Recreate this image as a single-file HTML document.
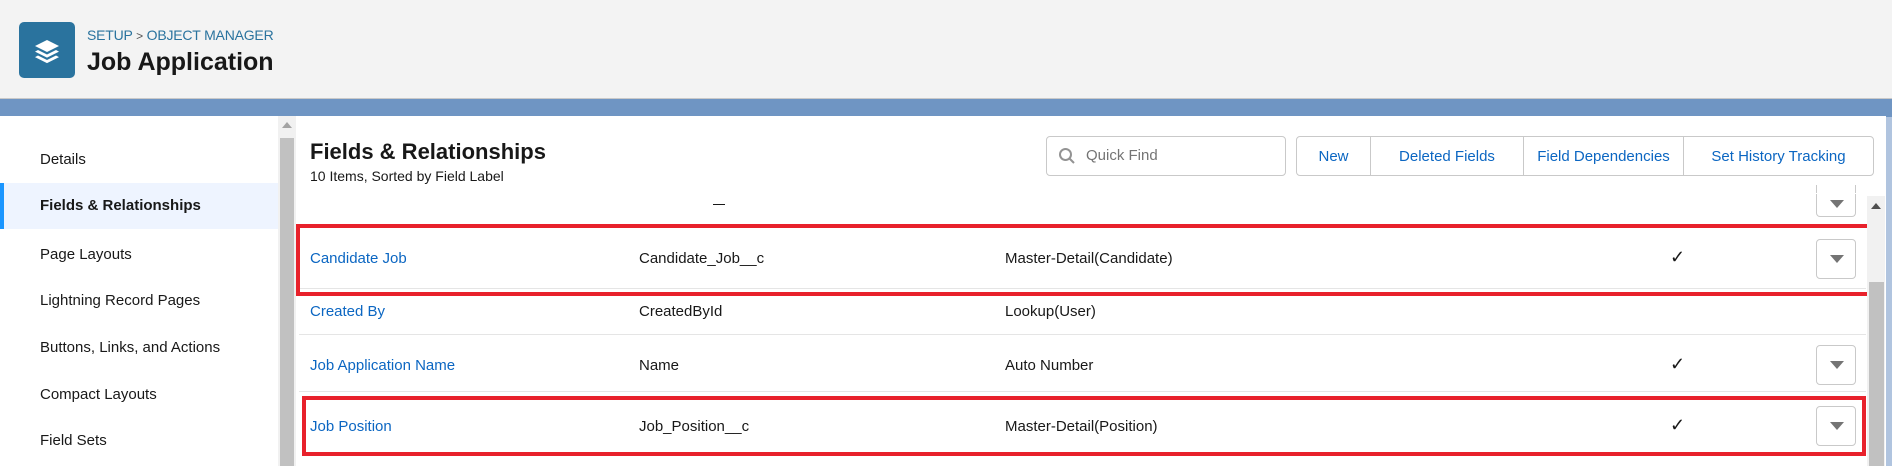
<!DOCTYPE html>
<html><head><style>
*{margin:0;padding:0;box-sizing:border-box}
body{width:1892px;height:466px;overflow:hidden;background:#b0c4df;font-family:"Liberation Sans",sans-serif;position:relative;color:#181818}
.a{position:absolute}
.hdr{left:0;top:0;width:1892px;height:99px;background:#f3f3f3;border-bottom:1px solid #c9c9c9;box-shadow:0 2px 3px rgba(0,0,0,.15)}
.band{left:0;top:99px;width:1892px;height:18px;background:#6f95c3}
.side{left:0;top:116px;width:278px;height:350px;background:#fff}
.sb{left:278px;top:116px;width:18px;height:350px;background:#f1f1f1}
.sbt{left:280px;top:138px;width:14px;height:328px;background:#c1c1c1}
.card{left:296px;top:116px;width:1590px;height:350px;background:#fff}
.si{left:40px;font-size:15px;color:#181818}
.lnk{color:#0b66c2}
.cell{font-size:15px}
.btn{top:136px;height:40px;border:1px solid #c9c9c9;border-radius:4px;background:#fff}
.bt{top:137px;height:38px;font-size:15px;color:#0b66c2;display:flex;align-items:center;justify-content:center}
.line{height:1px;background:#e5e5e5}
.red{border:4px solid #e8212b}
.dd{width:40px;height:40px;border:1px solid #c9c9c9;border-radius:4px;background:#fff}
.dd:after{content:"";position:absolute;left:13px;top:15px;border-left:7px solid transparent;border-right:7px solid transparent;border-top:8px solid #747474}
.chk{font-size:18px}
</style></head><body>
<div class="a hdr"></div>
<div class="a" style="left:19px;top:22px;width:56px;height:56px;background:#2a739e;border-radius:5px">
<svg width="56" height="56" viewBox="0 0 56 56"><g fill="#fff"><path d="M28 18l12 6-12 6-12-6z"/><path d="M19 28l9 4.5 9-4.5 3 1.6-12 6-12-6z"/><path d="M19 33.5l9 4.5 9-4.5 3 1.6-12 6-12-6z"/></g></svg></div>
<div class="a" style="left:87px;top:27px;font-size:14px;color:#2a739e;letter-spacing:-0.2px">SETUP <span style="font-size:12px;color:#555">&gt;</span> OBJECT MANAGER</div>
<div class="a" style="left:87px;top:48px;font-size:25px;font-weight:bold;color:#181818">Job Application</div>
<div class="a band"></div>
<div class="a side"></div>
<div class="a" style="left:0;top:183px;width:278px;height:46px;background:#eef4ff"></div>
<div class="a" style="left:0;top:183px;width:4px;height:46px;background:#1b96ff"></div>
<div class="a si" style="top:151px">Details</div>
<div class="a si" style="top:197px;font-weight:bold">Fields &amp; Relationships</div>
<div class="a si" style="top:246px">Page Layouts</div>
<div class="a si" style="top:292px">Lightning Record Pages</div>
<div class="a si" style="top:339px">Buttons, Links, and Actions</div>
<div class="a si" style="top:386px">Compact Layouts</div>
<div class="a si" style="top:432px">Field Sets</div>
<div class="a sb"></div><div class="a sbt"></div>
<div class="a" style="left:282px;top:122px;border-left:5px solid transparent;border-right:5px solid transparent;border-bottom:6px solid #a3a3a3"></div>
<div class="a card"></div>
<div class="a" style="left:310px;top:139px;font-size:22px;font-weight:bold">Fields &amp; Relationships</div>
<div class="a" style="left:310px;top:168px;font-size:14px">10 Items, Sorted by Field Label</div>
<div class="a btn" style="left:1046px;width:240px"></div>
<svg class="a" style="left:1058px;top:147px" width="18" height="18" viewBox="0 0 18 18"><circle cx="7.5" cy="7.5" r="5.5" fill="none" stroke="#939393" stroke-width="2"/><path d="M11.5 11.5l4.5 4.5" stroke="#939393" stroke-width="2"/></svg>
<div class="a" style="left:1086px;top:147px;font-size:15px;color:#747474">Quick Find</div>
<div class="a btn" style="left:1296px;width:578px"></div>
<div class="a" style="left:1370px;top:137px;width:1px;height:38px;background:#c9c9c9"></div>
<div class="a" style="left:1523px;top:137px;width:1px;height:38px;background:#c9c9c9"></div>
<div class="a" style="left:1683px;top:137px;width:1px;height:38px;background:#c9c9c9"></div>
<div class="a bt" style="left:1297px;width:73px">New</div>
<div class="a bt" style="left:1371px;width:152px">Deleted Fields</div>
<div class="a bt" style="left:1524px;width:159px">Field Dependencies</div>
<div class="a bt" style="left:1684px;width:189px">Set History Tracking</div>
<div class="a" style="left:713px;top:204px;width:12px;height:1px;background:#181818"></div>
<div class="a dd" style="left:1816px;top:185px;height:32px;border-top:none;border-radius:0 0 4px 4px"></div>
<div class="a" style="left:299px;top:193px;width:1568px;height:1px;background:#fff"></div>
<div class="a line" style="left:299px;top:288px;width:1567px"></div>
<div class="a line" style="left:299px;top:334px;width:1567px"></div>
<div class="a line" style="left:299px;top:391px;width:1567px"></div>
<div class="a cell lnk" style="left:310px;top:250px">Candidate Job</div>
<div class="a cell" style="left:639px;top:250px">Candidate_Job__c</div>
<div class="a cell" style="left:1005px;top:250px">Master-Detail(Candidate)</div>
<div class="a chk" style="left:1670px;top:247px">✓</div>
<div class="a dd" style="left:1816px;top:239px"></div>
<div class="a cell lnk" style="left:310px;top:303px">Created By</div>
<div class="a cell" style="left:639px;top:303px">CreatedById</div>
<div class="a cell" style="left:1005px;top:303px">Lookup(User)</div>
<div class="a cell lnk" style="left:310px;top:357px">Job Application Name</div>
<div class="a cell" style="left:639px;top:357px">Name</div>
<div class="a cell" style="left:1005px;top:357px">Auto Number</div>
<div class="a chk" style="left:1670px;top:354px">✓</div>
<div class="a dd" style="left:1816px;top:345px"></div>
<div class="a cell lnk" style="left:310px;top:418px">Job Position</div>
<div class="a cell" style="left:639px;top:418px">Job_Position__c</div>
<div class="a cell" style="left:1005px;top:418px">Master-Detail(Position)</div>
<div class="a chk" style="left:1670px;top:415px">✓</div>
<div class="a dd" style="left:1816px;top:406px"></div>
<div class="a red" style="left:296px;top:224px;width:1575px;height:72px"></div>
<div class="a red" style="left:302px;top:396px;width:1564px;height:60px"></div>
<div class="a" style="left:1867px;top:196px;width:18px;height:270px;background:#f1f1f1"></div>
<div class="a" style="left:1869px;top:282px;width:15px;height:184px;background:#c1c1c1"></div>
<div class="a" style="left:1871px;top:203px;border-left:5px solid transparent;border-right:5px solid transparent;border-bottom:6px solid #505050"></div>
</body></html>
